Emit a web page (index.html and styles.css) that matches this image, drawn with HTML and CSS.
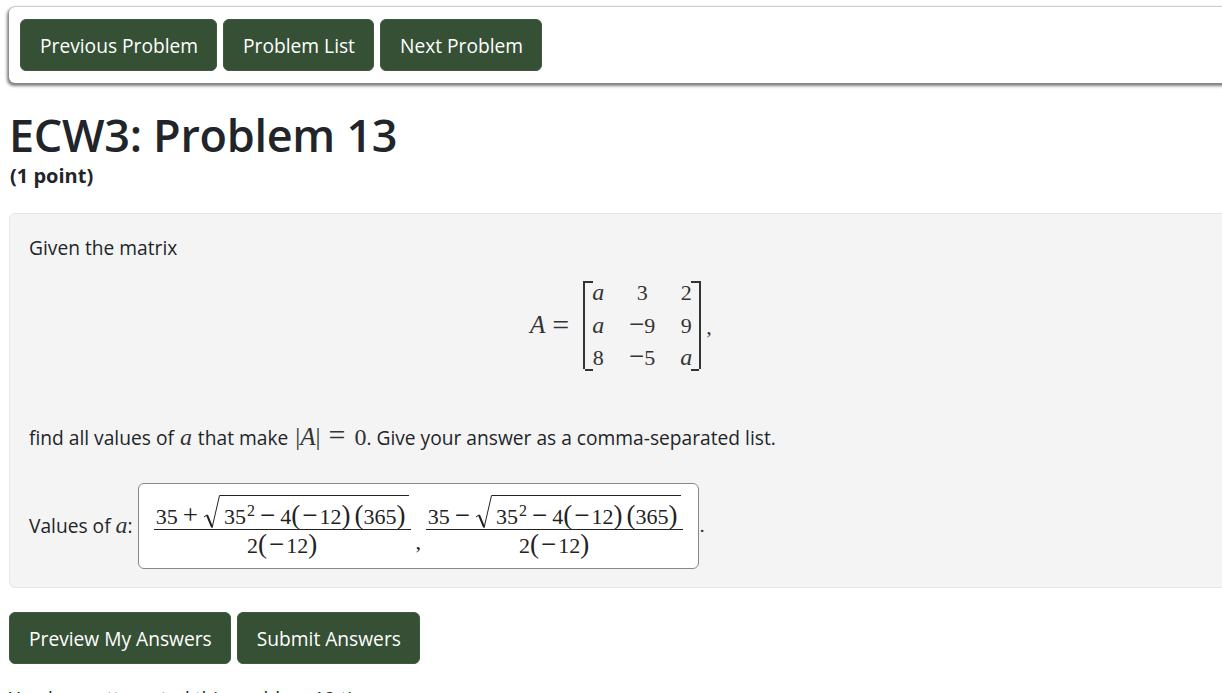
FILE: index.html
```html
<!DOCTYPE html>
<html lang="en">
<head>
<meta charset="utf-8">
<title>ECW3: Problem 13</title>
<link rel="stylesheet" href="styles.css">
</head>
<body>
<nav class="nav">
  <a class="btn">Previous Problem</a>
  <a class="btn">Problem List</a>
  <a class="btn">Next Problem</a>
</nav>
<h1 class="title">ECW3: Problem 13</h1>
<div class="points">(1 point)</div>
<section class="well">
  <p class="given">Given the matrix</p>
  <div class="display math">
    <span class="var big">A</span><span class="op eq">=</span>
    <span class="matrix">
      <span class="grid">
        <span class="var">a</span><span>3</span><span>2</span>
        <span class="var">a</span><span><span class="op tight">−</span>9</span><span>9</span>
        <span>8</span><span><span class="op tight">−</span>5</span><span class="var">a</span>
      </span>
    </span>
    <span class="comma">,</span>
  </div>
  <p class="find">find all values of <span class="math var inl spaced">a</span> that make <span class="math inl mathrun"><span class="stroke">|</span><span class="var big">A</span><span class="stroke">|</span><span class="op eq2">=</span>0</span>. Give your answer as a comma-separated list.</p>
  <div class="answer">
    <span class="label">Values of <span class="math var inl">a</span>:</span>
    <div class="box math">
      <span class="frac">
        <span class="num">
          <span class="lead">35<span class="op">+</span></span>
          <span class="root">
            <svg class="surd" viewBox="0 0 17 34" width="17" height="34" aria-hidden="true"><path d="M1 22 L4 20" fill="none" stroke="#222" stroke-width="1"/><path d="M4 20 L9 32" fill="none" stroke="#222" stroke-width="2"/><path d="M9 33 L16.5 .5 H17" fill="none" stroke="#222" stroke-width="1"/></svg>
            <span class="radicand">35<sup>2</sup><span class="op">−</span>4<span class="par">(</span><span class="op tight neg">−</span>12<span class="par">)</span><span class="par gap">(</span>365<span class="par">)</span></span>
          </span>
        </span>
        <span class="den">2<span class="par">(</span><span class="op tight neg">−</span>12<span class="par">)</span></span>
      </span>
      <span class="sep">,</span>
      <span class="frac">
        <span class="num">
          <span class="lead">35<span class="op">−</span></span>
          <span class="root">
            <svg class="surd" viewBox="0 0 17 34" width="17" height="34" aria-hidden="true"><path d="M1 22 L4 20" fill="none" stroke="#222" stroke-width="1"/><path d="M4 20 L9 32" fill="none" stroke="#222" stroke-width="2"/><path d="M9 33 L16.5 .5 H17" fill="none" stroke="#222" stroke-width="1"/></svg>
            <span class="radicand">35<sup>2</sup><span class="op">−</span>4<span class="par">(</span><span class="op tight neg">−</span>12<span class="par">)</span><span class="par gap">(</span>365<span class="par">)</span></span>
          </span>
        </span>
        <span class="den">2<span class="par">(</span><span class="op tight neg">−</span>12<span class="par">)</span></span>
      </span>
    </div>
    <span class="period">.</span>
  </div>
</section>
<div class="actions">
  <a class="btn">Preview My Answers</a>
  <a class="btn">Submit Answers</a>
</div>
<p class="attempts">You have attempted this problem 12 times.</p>
</body>
</html>
```
FILE: styles.css
```css
html, body {
  margin: 0;
  height: 693px;
  overflow: hidden;
  background: #fff;
}
body {
  font-family: "Open Sans", "Noto Sans", sans-serif;
  font-size: 19.2px;
  line-height: 30px;
  color: #212529;
  padding: 7px 0 0 9px;
  box-sizing: border-box;
  width: 1222px;
}
p { margin: 0; }
.nav {
  display: flex;
  gap: 6px;
  width: 1260px;
  height: 76px;
  box-sizing: border-box;
  padding: 12px 11px;
  background: #fff;
  border-radius: 6px;
  box-shadow: -1px 2px 3px 1px rgba(0,0,0,.5), 0 -1px 1px rgba(0,0,0,.15);
}
.btn {
  display: block;
  height: 52px;
  box-sizing: border-box;
  padding: 10px 18px 10px 19px;
  background: #355035;
  border: 1px solid #3d5a3d;
  border-radius: 6px;
  color: #fff;
  font-size: 19.2px;
  line-height: 32px;
  white-space: nowrap;
}
.title {
  margin: 23px 0 0;
  font-size: 45px;
  line-height: 58px;
  font-weight: 600;
  letter-spacing: -.3px;
  color: #212529;
}
.points {
  font-weight: 700;
  font-size: 20px;
  line-height: 24px;
  margin: 0 0 0 1px;
}
.well {
  width: 1260px;
  height: 375px;
  margin-top: 25px;
  box-sizing: border-box;
  padding: 19px;
  background: #f4f4f4;
  border: 1px solid #e6e6e6;
  border-radius: 6px;
}
.math {
  font-family: "Liberation Serif", "DejaVu Serif", serif;
}
.var { font-style: italic; font-size: 24px; }
.big { font-size: 25px; }
.op {
  font-size: 27px;
  font-style: normal;
  line-height: 0;
  margin: 0 5px;
}
.tight { margin: 0; }
.neg { margin: 0 2px; }
.par { font-size: 27px; line-height: 0; }
.gap { margin-left: 4px; }
.display {
  display: flex;
  align-items: center;
  width: 1173px;
  margin-top: 18px;
  padding-left: 501px;
  box-sizing: border-box;
  font-size: 22px;
  color: #333;
}
.eq { font-size: 30px; margin: 0 14px 0 7px; }
.matrix {
  position: relative;
  height: 88px;
  padding: 0 6px;
  border-left: 2px solid #333;
  border-right: 2px solid #333;
}
.matrix::before, .matrix::after {
  content: "";
  position: absolute;
  left: 0;
  top: 0;
  width: 8px;
  height: 86px;
  border-top: 2px solid #333;
  border-bottom: 2px solid #333;
}
.matrix::after { left: auto; right: 0; }
.grid {
  display: grid;
  grid-template-columns: 14px 28px 14px;
  column-gap: 23px;
  grid-auto-rows: 32.5px;
  margin-top: -5px;
  justify-items: center;
  line-height: 33px;
  font-size: 22px;
}
.comma { margin: 4px 0 0 5px; line-height: 20px; }
.find { margin-top: 54px; }
.inl { font-size: 24px; line-height: 0; color: #333; }
.spaced { margin: 0 1px; }
.mathrun { margin-left: 2px; }
.stroke { font-size: 25px; font-weight: 300; }
.eq2 { font-size: 30px; margin: 0 9px 0 8px; }
.answer {
  display: flex;
  align-items: center;
  margin-top: 30px;
}
.label { margin-right: 5px; }
.box {
  display: flex;
  align-items: center;
  flex: none;
  width: 561px;
  height: 86px;
  box-sizing: border-box;
  padding: 0 15px;
  background: #fff;
  border: 1px solid #888;
  border-radius: 6px;
  font-size: 22px;
  color: #222;
}
.frac {
  display: inline-flex;
  flex-direction: column;
  align-items: center;
  flex: none;
  width: 257px;
  margin-top: 2px;
}
.num {
  display: flex;
  justify-content: center;
  align-items: flex-end;
  white-space: pre;
  width: 100%;
  height: 36px;
  box-sizing: border-box;
  border-bottom: 1px solid #222;
}
.lead { line-height: 28px; margin-bottom: -2px; }
.den { line-height: 30px; height: 30px; margin-top: 1px; }
.root { display: flex; align-items: flex-start; margin-bottom: 0; }
.surd { display: block; flex: none; }
.radicand {
  display: block;
  box-sizing: border-box;
  height: 34px;
  border-top: 1px solid #222;
  padding: 7px 3px 0 4px;
  line-height: 28px;
}
sup { font-size: 16px; line-height: 0; vertical-align: 8px; margin-left: 1px; }
.sep { flex: none; width: 15px; text-align: center; align-self: flex-end; margin-bottom: 16px; line-height: 20px; }
.period { font-family: "Liberation Serif", serif; margin-left: 1px; }
.actions { display: flex; gap: 6px; margin-top: 24px; }
.attempts { margin-top: 20px; white-space: nowrap; }
```
